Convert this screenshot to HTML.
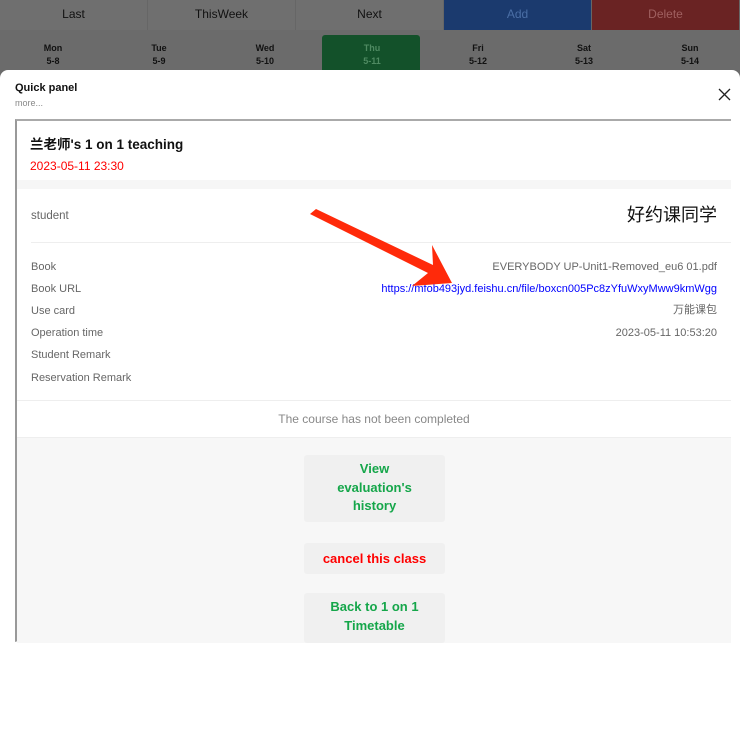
<!DOCTYPE html>
<html><head><meta charset="utf-8"><style>
*{box-sizing:border-box;margin:0;padding:0}
body{width:740px;height:720px;background:#fff;font-family:"Liberation Sans","Noto Sans CJK SC",sans-serif;position:relative;overflow:hidden}
.top{position:absolute;left:0;top:0;width:740px;height:30px;display:flex;background:#6f6f6f}
.top div{flex:1;text-align:center;line-height:29px;font-size:12px;color:#111;border-right:1px solid #666}
.week{position:absolute;left:0;top:30px;width:740px;height:50px;background:#6b6b6b}
.d{position:absolute;top:12px;width:60px;text-align:center;font-size:9px;font-weight:bold;color:#111;line-height:13px}
.thu{position:absolute;left:322px;top:5px;width:98px;height:40px;background:#13512a;border-radius:3px}
.modal{position:absolute;left:0;top:70px;width:740px;height:660px;background:#fff;border-radius:8px 8px 0 0}
.box{position:absolute;left:15px;top:119px;width:716px;height:523px;border-top:2px solid #aaa;border-left:2px solid #999;border-bottom:1px solid #ddd;background:#fff}
.row{position:absolute;left:14px;font-size:11px;color:#666;line-height:14px}
.val{position:absolute;right:14px;font-size:11px;color:#666;text-align:right;line-height:14px}
.btn{position:absolute;left:287px;width:141px;background:#f0f0f0;border-radius:3px;text-align:center;font-weight:bold;font-size:13px;color:#15a64a;line-height:18.5px}
</style></head><body>
<div class="top"><div>Last</div><div>ThisWeek</div><div>Next</div><div style="background:#1b3a6e;color:#4b6fa6">Add</div><div style="background:#6a2323;color:#a06060">Delete</div></div>
<div class="week">
<div class="thu"></div>
<div class="d" style="left:23px">Mon<br>5-8</div>
<div class="d" style="left:129px">Tue<br>5-9</div>
<div class="d" style="left:235px">Wed<br>5-10</div>
<div class="d" style="left:342px;color:#4f8a62">Thu<br>5-11</div>
<div class="d" style="left:448px">Fri<br>5-12</div>
<div class="d" style="left:554px">Sat<br>5-13</div>
<div class="d" style="left:660px">Sun<br>5-14</div>
</div>
<div class="modal">
<div style="position:absolute;left:15px;top:12px;font-size:11px;font-weight:bold;color:#111">Quick panel</div>
<div style="position:absolute;left:15px;top:28px;font-size:9px;color:#888">more...</div>
<svg style="position:absolute;left:718px;top:18px" width="13" height="13" viewBox="0 0 13 13"><path d="M1 1L12 12M12 1L1 12" stroke="#222" stroke-width="1.3"/></svg>
</div>
<div class="box">
<div style="position:absolute;left:13px;top:15px;font-size:13.5px;font-weight:bold;color:#111;line-height:18px">兰老师's 1 on 1 teaching</div>
<div style="position:absolute;left:13px;top:38px;font-size:12px;color:#f00">2023-05-11 23:30</div>
<div style="position:absolute;left:0;top:59px;width:714px;height:9px;background:#f6f6f6"></div>
<div class="row" style="top:88px;font-size:11.5px">student</div>
<div class="val" style="top:82px;font-size:18px;color:#111;line-height:24px">好约课同学</div>
<div style="position:absolute;left:14px;top:121px;width:700px;height:1px;background:#eee"></div>
<div class="row" style="top:139px">Book</div><div class="val" style="top:139px">EVERYBODY UP-Unit1-Removed_eu6 01.pdf</div>
<div class="row" style="top:161px">Book URL</div><div class="val" style="top:161px;color:#00f">https://mfob493jyd.feishu.cn/file/boxcn005Pc8zYfuWxyMww9kmWgg</div>
<div class="row" style="top:183px">Use card</div><div class="val" style="top:182px">万能课包</div>
<div class="row" style="top:205px">Operation time</div><div class="val" style="top:205px">2023-05-11 10:53:20</div>
<div class="row" style="top:227px">Student Remark</div>
<div class="row" style="top:250px">Reservation Remark</div>
<div style="position:absolute;left:0;top:279px;width:714px;height:1px;background:#eee"></div>
<div style="position:absolute;left:0;top:291px;width:714px;text-align:center;font-size:12px;color:#888">The course has not been completed</div>
<div style="position:absolute;left:0;top:316px;width:714px;height:206px;background:#f7f7f7;border-top:1px solid #eee">
<div class="btn" style="top:17px;height:67px;padding-top:5px">View<br>evaluation's<br>history</div>
<div class="btn" style="top:105px;height:31px;line-height:31px;color:#f00">cancel this class</div>
<div class="btn" style="top:155px;height:50px;padding-top:5px">Back to 1 on 1<br>Timetable</div>
</div>
</div>
<svg style="position:absolute;left:0;top:0" width="740" height="720"><polygon points="310,214 316,209 433,265 432,245 452,283 412,286 428,273" fill="#ff2a0a"/></svg>
</body></html>
